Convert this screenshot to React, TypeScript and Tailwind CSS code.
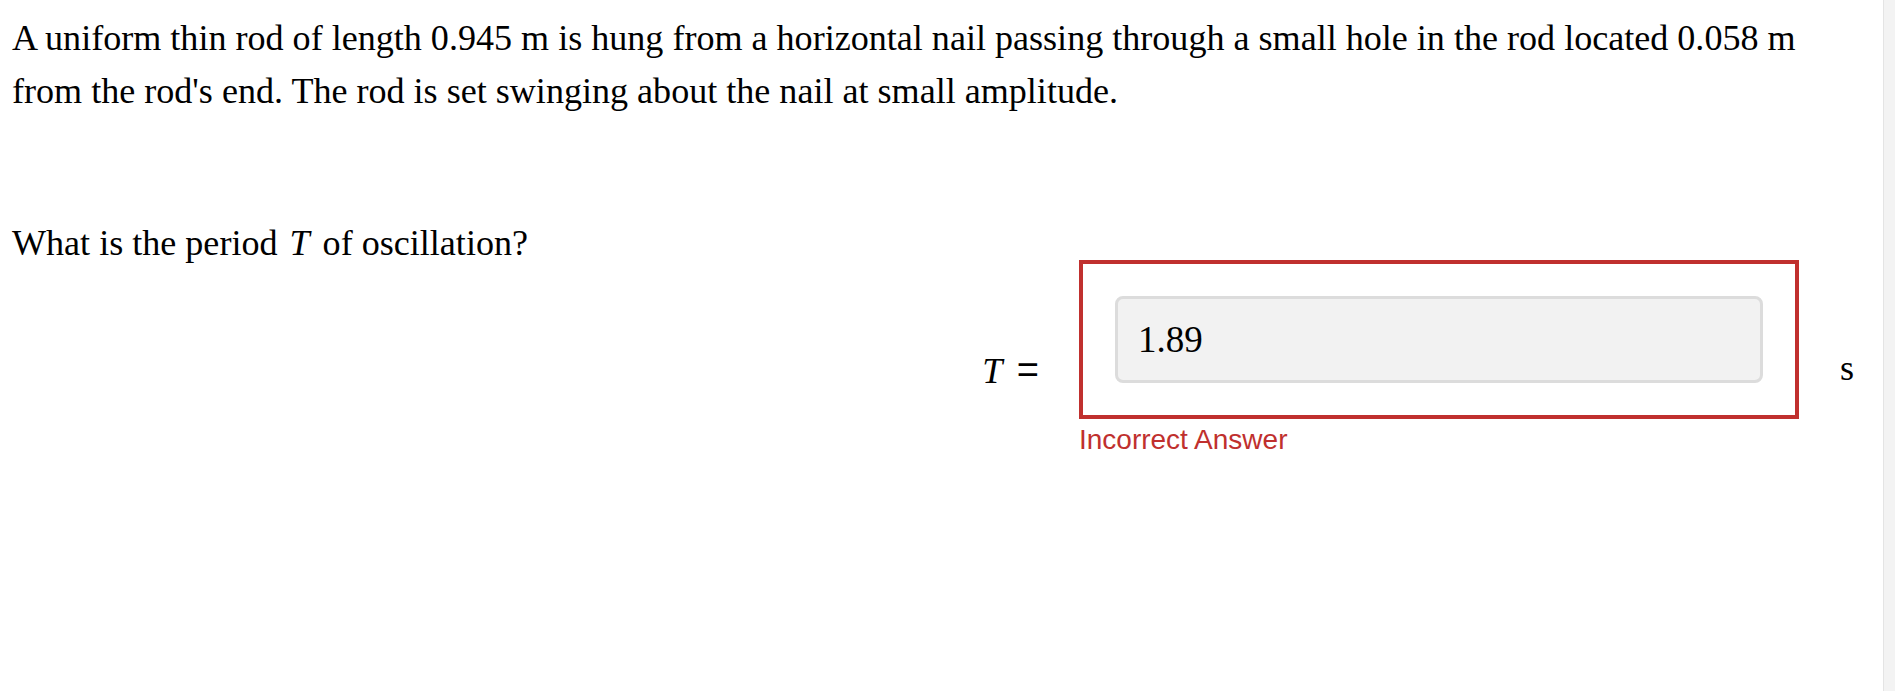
import { useState } from "react";

const serif = "font-['Liberation_Serif','Times_New_Roman',serif]";
const sans = "font-['Liberation_Sans',Arial,sans-serif]";

function AnswerRow() {
    const [value, setValue] = useState("1.89");

    return (
        <div className="flex justify-end pr-[29px]">
            <div className={`mt-[86px] mr-[40px] text-[36.1px] leading-[48px] text-black ${serif}`}>
                <span className="italic">T</span>
                <span className={`ml-[4px] text-[38px] ${sans}`}> =</span>
            </div>
            <div className="flex w-[720px] flex-col">
                <div className="border-4 border-[#c0302e] p-[32px]">
                    <input
                        type="text"
                        value={value}
                        onChange={(e) => setValue(e.target.value)}
                        className={`block h-[87px] w-full rounded-[8px] border-[3px] border-[#dcdcdc] bg-[#f2f2f2] pl-[20px] text-[37px] text-black outline-none ${serif}`}
                    />
                </div>
                <p className={`mt-[5px] text-[28px] leading-[32px] text-[#c0302e] ${sans}`}>
                    Incorrect Answer
                </p>
            </div>
            <div className={`mt-[84px] ml-[41px] text-[36.1px] leading-[48px] text-black ${serif}`}>
                s
            </div>
        </div>
    );
}

export default function App() {
    return (
        <div className="flex min-h-screen bg-white">
            <div className={`flex-1 pt-[12px] pl-[12px] text-black ${serif}`}>
                <p className="pr-[40px] text-[36.1px] leading-[53px]">
                    A uniform thin rod of length 0.945 m is hung from a horizontal nail passing through a small hole in the rod located 0.058 m from the rod's end. The rod is set swinging about the nail at small amplitude.
                </p>
                <p className="mt-[108px] text-[36.1px] leading-[34px]">
                    What is the period <span className="ml-[3px] mr-[4px] italic">T</span> of oscillation?
                </p>
                <div className="-ml-[12px]">
                    <AnswerRow />
                </div>
            </div>
            {/* scrollbar track */}
            <div className="w-[12px] border-l border-[#e4e4e4] bg-[#f3f3f3]" />
        </div>
    );
}
